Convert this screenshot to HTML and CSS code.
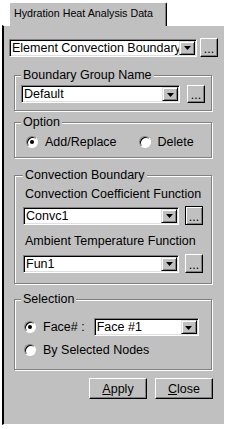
FILE: index.html
```html
<!DOCTYPE html>
<html lang="en">
<head>
  <meta charset="UTF-8">
  <title>Hydration Heat Analysis Data</title>
  <link rel="stylesheet" href="styles.css">
</head>
<body>

<div class="tabs">
  <div class="tab">Hydration Heat Analysis Data</div>
</div>

<div class="panel">
  <!-- boundary type -->
  <div class="row topRow">
    <div class="combo comboType">
      <span class="comboText">Element Convection Boundary</span>
      <span class="drop"><svg width="7" height="4"><polygon points="0,0 7,0 3.5,4"/></svg></span>
    </div>
    <button class="dots">...</button>
  </div>

  <fieldset class="group groupName">
    <legend>Boundary Group Name</legend>
    <div class="row">
      <div class="combo comboName">
        <span class="comboText">Default</span>
        <span class="drop"><svg width="7" height="4"><polygon points="0,0 7,0 3.5,4"/></svg></span>
      </div>
      <button class="dots">...</button>
    </div>
  </fieldset>

  <fieldset class="group groupOption">
    <legend>Option</legend>
    <div class="row">
      <label class="radioItem addItem"><span class="radio checked"></span>Add/Replace</label>
      <label class="radioItem delItem"><span class="radio"></span>Delete</label>
    </div>
  </fieldset>

  <fieldset class="group groupConv">
    <legend>Convection Boundary</legend>
    <div class="fieldLabel">Convection Coefficient Function</div>
    <div class="row firstCombo">
      <div class="combo comboFunc">
        <span class="comboText">Convc1</span>
        <span class="drop"><svg width="7" height="4"><polygon points="0,0 7,0 3.5,4"/></svg></span>
      </div>
      <button class="dots default">...</button>
    </div>
    <div class="fieldLabel secondLabel">Ambient Temperature Function</div>
    <div class="row secondCombo">
      <div class="combo comboFunc">
        <span class="comboText">Fun1</span>
        <span class="drop"><svg width="7" height="4"><polygon points="0,0 7,0 3.5,4"/></svg></span>
      </div>
      <button class="dots">...</button>
    </div>
  </fieldset>

  <fieldset class="group groupSel">
    <legend>Selection</legend>
    <div class="row faceRow">
      <label class="radioItem"><span class="radio checked"></span>Face# :</label>
      <div class="combo comboFace">
        <span class="comboText">Face #1</span>
        <span class="drop"><svg width="7" height="4"><polygon points="0,0 7,0 3.5,4"/></svg></span>
      </div>
    </div>
    <div class="row nodesRow">
      <label class="radioItem"><span class="radio"></span>By Selected Nodes</label>
    </div>
  </fieldset>

  <div class="btns">
    <button class="btn"><u>A</u>pply</button>
    <button class="btn"><u>C</u>lose</button>
  </div>
</div>

</body>
</html>
```

FILE: styles.css
```css
* { margin: 0; padding: 0; box-sizing: border-box; }
body { background: #fff; color: #000;
  font-family: "Liberation Sans", Arial, sans-serif; font-size: 12.5px; }
button { font-family: inherit; font-size: inherit; color: #000; }

/* tab strip */
.tabs { display: flex; padding: 2px 0 0 9px; }
.tab { width: 158px; height: 24px; margin-bottom: -1px;
  padding: 4px 0 0 4px; font-size: 10.7px; line-height: 12px;
  background: #c0c0c0; border-top: 1px solid #fff; border-left: 1px solid #fff;
  border-right: 1px solid #000; box-shadow: inset -1px 0 0 #808080;
  border-radius: 2px 2px 0 0; position: relative; z-index: 1; }

.panel { width: 223px; height: 400px; margin-left: 2px;
  display: flex; flex-direction: column; background: #c0c0c0;
  border-top: 1px solid #fff; border-left: 2px solid #000;
  border-right: 1px solid #fff; border-bottom: 1px solid #fff;
  box-shadow: 0 2px 0 #404040; }

.row { display: flex; align-items: center; }
.topRow { margin: 12px 0 0 5px; gap: 3px; height: 19px; }

/* combo boxes */
.combo { height: 18px; display: flex; align-items: center; background: #fff;
  border: 1px solid; border-color: #808080 #fff #fff #808080;
  box-shadow: inset 1px 1px 0 #000, inset -1px -1px 0 #dfdfdf;
  padding: 1px 1px 1px 2px; }
.comboText { flex: 1; overflow: hidden; white-space: nowrap; line-height: 14px; }
.drop { width: 16px; height: 14px; flex: none; display: flex;
  align-items: center; justify-content: center; padding-top: 1px;
  background: #c0c0c0; border: 1px solid; border-color: #dfdfdf #000 #000 #dfdfdf;
  box-shadow: inset 1px 1px 0 #fff, inset -1px -1px 0 #808080; }
.comboType { width: 188px; }
.comboName { width: 159px; }
.comboFunc { width: 156px; }
.comboFace { width: 105px; margin-left: 9px; }

.dots { width: 18px; height: 19px; background: #c0c0c0; line-height: 12px;
  border: 1px solid; border-color: #fff #000 #000 #fff;
  box-shadow: inset -1px -1px 0 #808080; padding-top: 2px; }
.groupName .dots { height: 18px; }
.dots.default { border-color: #000; box-shadow: inset 1px 1px 0 #fff, inset -1px -1px 0 #808080; }

/* group boxes */
.group { width: 198px; margin-left: 10px; min-width: 0;
  border: 1px solid #808080; box-shadow: inset 1px 1px 0 #fff, 1px 1px 0 #fff; }
.group legend { padding: 0 2px; line-height: 14px; background: #c0c0c0; }

.groupName { margin-top: 11px; padding: 3px 5px 7px 6px; }
.groupName .row { gap: 7px; }

.groupOption { margin-top: 4px; padding: 6px 5px 8px 6px; }
.radioItem { display: flex; align-items: center; line-height: 14px; height: 14px; }
.addItem { margin-left: 5px; }
.delItem { margin-left: 22px; }
.radio { width: 12px; height: 12px; margin-right: 7px; border-radius: 50%;
  background: #fff; border: 1px solid; border-color: #808080 #fff #fff #808080;
  box-shadow: inset 1px 1px 0 #000; display: flex;
  align-items: center; justify-content: center; }
.radio.checked::after { content: ""; width: 4px; height: 4px;
  border-radius: 50%; background: #000; }

.groupConv { margin-top: 10px; padding: 5px 5px 10px 8px; }
.fieldLabel { line-height: 14px; padding-left: 2px; }
.groupConv .row { gap: 6px; }
.firstCombo { margin-top: 5px; }
.secondLabel { margin-top: 9px; }
.secondCombo { margin-top: 6px; }

.groupSel { margin-top: 8px; padding: 12px 5px 12px 6px; }
.faceRow .radioItem, .nodesRow .radioItem { margin-left: 3px; }
.nodesRow { margin-top: 7px; }

/* bottom buttons */
.btns { display: flex; justify-content: flex-end; gap: 8px;
  margin-top: 8px; padding-right: 11px; }
.btn { width: 58px; height: 21px; background: #c0c0c0;
  border: 1px solid; border-color: #fff #000 #000 #fff;
  box-shadow: inset -1px -1px 0 #808080; }
```
